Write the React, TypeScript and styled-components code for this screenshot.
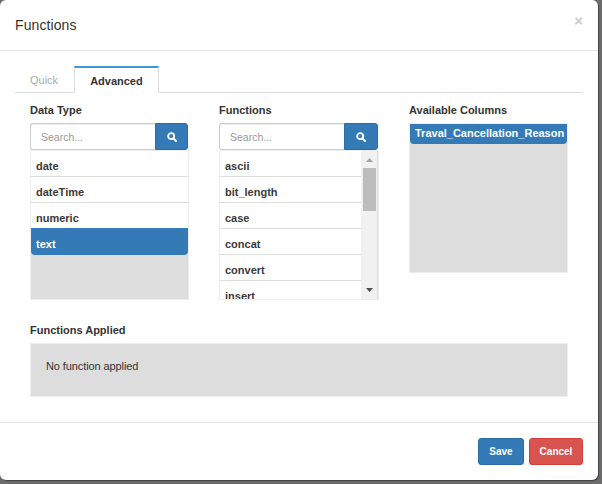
import styled, { createGlobalStyle } from "styled-components";

const dataTypes = ["date", "dateTime", "numeric", "text"];
const functionNames = ["ascii", "bit_length", "case", "concat", "convert", "insert"];

function SearchIcon() {
  return (
    <svg width="10" height="10" viewBox="0 0 12 12" aria-hidden="true">
      <circle cx="5" cy="5" r="3.6" fill="none" stroke="#fff" strokeWidth="2.2" />
      <path d="M7.7 7.7 L10.8 10.8" stroke="#fff" strokeWidth="2.4" strokeLinecap="round" />
    </svg>
  );
}

function SearchBox({ wide }: { wide?: boolean }) {
  return (
    <SearchGroup>
      <SearchInput placeholder="Search..." />
      <SearchButton type="button" $wide={wide}>
        <SearchIcon />
      </SearchButton>
    </SearchGroup>
  );
}

export default function App() {
  return (
    <>
      <GlobalStyle />
      <Modal>
        <Header>
          <Title>Functions</Title>
          <Close>×</Close>
        </Header>
        <Body>
          <Tabs>
            <Tab>Quick</Tab>
            <Tab $active>Advanced</Tab>
          </Tabs>
          <Columns>
            <Column>
              <Label>Data Type</Label>
              <SearchBox />
              <ListPanel>
                {dataTypes.map((name) => (
                  <Item key={name} $selected={name === "text"}>
                    {name}
                  </Item>
                ))}
              </ListPanel>
            </Column>
            <Column>
              <Label>Functions</Label>
              <SearchBox wide />
              <ScrollPanel>
                <ScrollList>
                  {functionNames.map((name) => (
                    <Item key={name}>{name}</Item>
                  ))}
                </ScrollList>
                <Scrollbar>
                  <ScrollArrow viewBox="0 0 7 4">
                    <path d="M3.5 0 L7 4 H0 Z" fill="#a3a3a3" />
                  </ScrollArrow>
                  <ScrollThumb />
                  <ScrollTrack />
                  <ScrollArrow viewBox="0 0 7 4">
                    <path d="M0 0 H7 L3.5 4 Z" fill="#505050" />
                  </ScrollArrow>
                </Scrollbar>
              </ScrollPanel>
            </Column>
            <Column>
              <Label>Available Columns</Label>
              <ColumnsPanel>
                <ColumnItem>Traval_Cancellation_Reason</ColumnItem>
              </ColumnsPanel>
            </Column>
          </Columns>
          <AppliedLabel>Functions Applied</AppliedLabel>
          <AppliedBox>No function applied</AppliedBox>
        </Body>
        <Footer>
          <Button $variant="primary">Save</Button>
          <Button $variant="danger">Cancel</Button>
        </Footer>
      </Modal>
    </>
  );
}

/* ---------------- styled-components ---------------- */

const GlobalStyle = createGlobalStyle`
  html, body {
    margin: 0;
    height: 484px;
    overflow: hidden;
    background-color: #6b6b6b;
    font-family: "Liberation Sans", Arial, sans-serif;
    color: #333;
  }
  * {
    box-sizing: border-box;
  }
`;

const Modal = styled.div`
  width: 598px;
  height: 480px;
  background-color: #fff;
  border-radius: 6px;
  box-shadow: 1px 1px 0 #444;
  display: flex;
  flex-direction: column;
`;

const Header = styled.div`
  height: 51px;
  padding: 0 15px;
  border-bottom: 1px solid #e5e5e5;
  display: flex;
  align-items: center;
  justify-content: space-between;
`;

const Title = styled.h4`
  margin: 0;
  font-size: 14px;
  font-weight: 400;
  letter-spacing: 0.1px;
`;

const Close = styled.span`
  font-size: 15px;
  font-weight: 700;
  color: #c9c9c9;
  margin-top: -10px;
`;

const Body = styled.div`
  height: 371px;
  padding: 15px 15px 0;
`;

const Tabs = styled.div`
  height: 27px;
  border-bottom: 1px solid #ddd;
  display: flex;
  gap: 1px;
`;

const Tab = styled.div<{ $active?: boolean }>`
  height: 27px;
  padding: 0 15px;
  font-size: 11px;
  line-height: 28px;
  font-weight: ${(p) => (p.$active ? 700 : 400)};
  color: ${(p) => (p.$active ? "#333" : "#aaa")};
  ${(p) =>
    p.$active
      ? `
    background-color: #fff;
    border: 1px solid #ddd;
    border-top: 2px solid #3c97dd;
    border-bottom-color: #fff;
    line-height: 27px;
  `
      : ""}
`;

const Columns = styled.div`
  display: grid;
  grid-template-columns: 159px 160px 159px;
  column-gap: 30px;
  margin: 10px 15px 0;
  height: 220px;
`;

const Column = styled.div`
  display: flex;
  flex-direction: column;
`;

const Label = styled.div`
  height: 20px;
  font-size: 11px;
  font-weight: 700;
  line-height: 14px;
`;

const SearchGroup = styled.div`
  display: flex;
  height: 27px;
  margin-right: 1px;
`;

const SearchInput = styled.input`
  flex: 1;
  min-width: 0;
  height: 27px;
  padding: 0 9px 0 10px;
  border: 1px solid #ccc;
  border-right: none;
  border-radius: 3px 0 0 3px;
  box-shadow: inset 0 1px 1px rgba(0, 0, 0, 0.075);
  font-family: inherit;
  font-size: 10.5px;
  color: #555;
  outline: none;

  &::placeholder {
    color: #999;
    opacity: 1;
  }
`;

const SearchButton = styled.button<{ $wide?: boolean }>`
  width: ${(p) => (p.$wide ? "34px" : "33px")};
  height: 27px;
  padding: 0;
  border: 1px solid #2e6da4;
  border-radius: 0 3px 3px 0;
  background-color: #337ab7;
  display: flex;
  align-items: center;
  justify-content: center;
`;

const ListPanel = styled.div`
  height: 150px;
  background-color: #ddd;
  border: 1px solid #eee;
  overflow: hidden;
`;

const Item = styled.div<{ $selected?: boolean }>`
  height: ${(p) => (p.$selected ? "27px" : "26px")};
  margin-top: ${(p) => (p.$selected ? "-1px" : "0")};
  padding: ${(p) => (p.$selected ? "3px" : "2px")} 0 0 5px;
  font-size: 11px;
  line-height: 26px;
  font-weight: 700;
  color: ${(p) => (p.$selected ? "#fff" : "#3a3a3a")};
  background-color: ${(p) => (p.$selected ? "#337ab7" : "#fff")};
  border-bottom: ${(p) => (p.$selected ? "none" : "1px solid #ddd")};
  border-radius: ${(p) => (p.$selected ? "0 0 4px 4px" : "0")};
`;

const ScrollPanel = styled.div`
  height: 150px;
  border: 1px solid #eee;
  display: flex;
  overflow: hidden;
`;

const ScrollList = styled.div`
  flex: 1;
  min-width: 0;
  overflow: hidden;
`;

const Scrollbar = styled.div`
  width: 17px;
  background-color: #f1f1f1;
  border-right: 1px solid #ddd;
  padding: 7px 1px;
  display: flex;
  flex-direction: column;
  align-items: center;
`;

const ScrollArrow = styled.svg`
  width: 7px;
  height: 4px;
  flex: none;
`;

const ScrollThumb = styled.div`
  width: 13px;
  height: 43px;
  margin-top: 6px;
  background-color: #bcbcbc;
`;

const ScrollTrack = styled.div`
  flex: 1;
`;

const ColumnsPanel = styled.div`
  height: 150px;
  background-color: #ddd;
  border: 1px solid #eee;
`;

const ColumnItem = styled.div`
  height: 20px;
  padding-left: 5px;
  font-size: 11px;
  font-weight: 700;
  line-height: 19px;
  color: #fff;
  background-color: #337ab7;
  border-radius: 0 0 4px 4px;
  white-space: nowrap;
`;

const AppliedLabel = styled(Label)`
  margin: 0 15px;
`;

const AppliedBox = styled.div`
  height: 54px;
  margin: 0 15px;
  padding-left: 15px;
  background-color: #ddd;
  border: 1px solid #eee;
  font-size: 11px;
  letter-spacing: -0.1px;
  line-height: 44px;
`;

const Footer = styled.div`
  flex: 1;
  border-top: 1px solid #e5e5e5;
  padding: 15px 15px 0;
  display: flex;
  justify-content: flex-end;
  align-items: flex-start;
  gap: 5px;
`;

const Button = styled.button<{ $variant: "primary" | "danger" }>`
  width: ${(p) => (p.$variant === "primary" ? "46px" : "54px")};
  height: 27px;
  padding: 0;
  border-radius: 3px;
  font-family: inherit;
  font-size: 10px;
  font-weight: 700;
  color: #fff;
  background-color: ${(p) => (p.$variant === "primary" ? "#337ab7" : "#d9534f")};
  border: 1px solid ${(p) => (p.$variant === "primary" ? "#2e6da4" : "#d43f3a")};
`;
